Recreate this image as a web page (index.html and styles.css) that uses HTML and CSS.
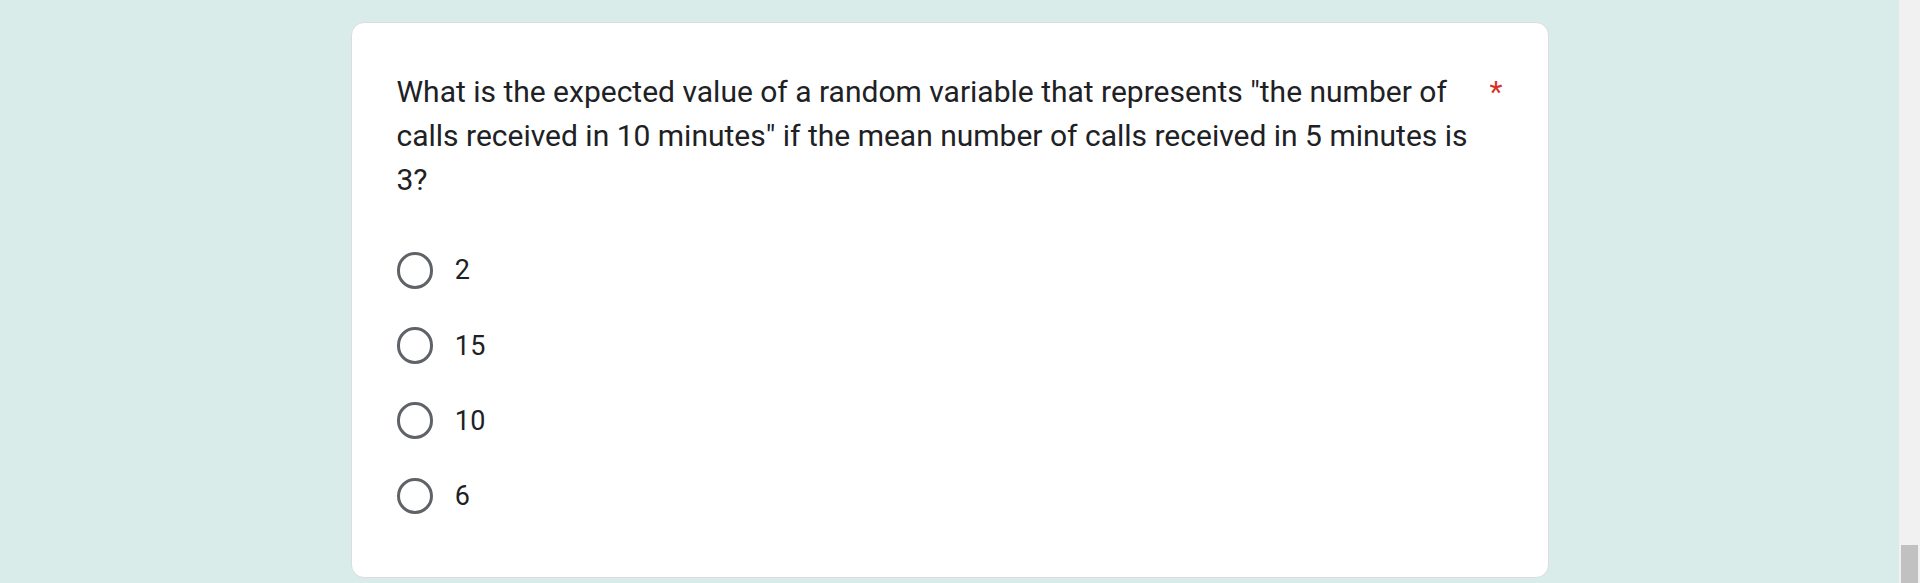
FILE: index.html
```html
<!DOCTYPE html>
<html lang="en">
<head>
<meta charset="utf-8">
<title>Question</title>
<link rel="stylesheet" href="styles.css">
</head>
<body>
<div class="page">
  <main class="main">
    <section class="card">
      <div class="title-row">
        <div class="title">What is the expected value of a random variable that represents "the number of calls received in 10 minutes" if the mean number of calls received in 5 minutes is 3?</div>
        <span class="req">*</span>
      </div>
      <div class="options">
        <label class="option"><span class="radio"></span><span class="label">2</span></label>
        <label class="option"><span class="radio"></span><span class="label">15</span></label>
        <label class="option"><span class="radio"></span><span class="label">10</span></label>
        <label class="option"><span class="radio"></span><span class="label">6</span></label>
      </div>
    </section>
  </main>
  <div class="scrollbar"><div class="thumb"></div></div>
</div>
</body>
</html>
```
FILE: styles.css
```css
html, body {
  margin: 0;
  padding: 0;
  height: 583px;
  overflow: hidden;
}
body {
  font-family: Roboto, "Noto Sans", Arial, sans-serif;
  color: #202124;
}
.page {
  display: flex;
  height: 583px;
}
.main {
  flex: 1;
  background: #daece9;
  display: flex;
  justify-content: center;
  align-items: flex-start;
  padding-top: 22px;
}
.card {
  width: 1198px;
  height: 556px;
  box-sizing: border-box;
  background: #fff;
  border: 1px solid #dadce0;
  border-radius: 13px;
  padding: 47px 45px 41px 45px;
}
.title-row {
  display: flex;
  align-items: flex-start;
}
.title {
  flex: 1;
  font-size: 30px;
  line-height: 44px;
  font-weight: 400;
  color: #202124;
}
.req {
  color: #d93025;
  font-size: 30px;
  line-height: 44px;
  padding-left: 12px;
}
.options {
  margin-top: 30.6px;
  display: flex;
  flex-direction: column;
}
.option {
  height: 75.3px;
  display: flex;
  align-items: center;
}
.radio {
  width: 36.7px;
  height: 36.7px;
  box-sizing: border-box;
  border: 3.6px solid #5f6368;
  border-radius: 50%;
  margin-right: 21.5px;
  flex: none;
}
.label {
  font-size: 27px;
  letter-spacing: 0.4px;
  color: #202124;
}
.scrollbar {
  width: 21px;
  box-sizing: border-box;
  padding: 0 2px;
  background: #f1f1f1;
  display: flex;
  flex-direction: column;
  justify-content: flex-end;
}
.thumb {
  height: 38px;
  background: #c1c1c1;
}
```
